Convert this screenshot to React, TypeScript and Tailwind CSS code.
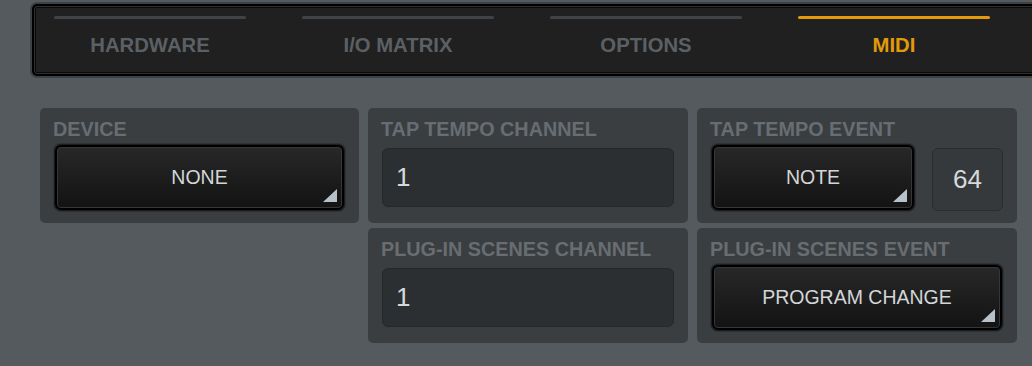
const tabs = [
  { label: "HARDWARE", active: false },
  { label: "I/O MATRIX", active: false },
  { label: "OPTIONS", active: false },
  { label: "MIDI", active: true },
];

const Corner = () => (
  <svg className="absolute bottom-[6px] right-[5px] h-[13px] w-[14px]" viewBox="0 0 14 13">
    <polygon points="14,0 14,13 0,13" fill="#b9c1c8" />
  </svg>
);

const Select = ({ value, className = "" }: { value: string; className?: string }) => (
  <div className={`h-[69px] rounded-[8px] bg-[#2e3235] p-[2px] ${className}`}>
    <div className="relative flex h-full items-center justify-center rounded-[6px] border-2 border-black bg-gradient-to-b from-[#282828] to-[#131313] text-[19.5px] text-[#d3d6d9] shadow-[inset_0_0_0_1px_#363636,0_0_0_1px_#1a1c1e]">
      {value}
      <Corner />
    </div>
  </div>
);

const Field = ({ value }: { value: string }) => (
  <div className="h-[69px] px-[1px] pt-[5px]">
    <div className="flex h-[59px] items-center rounded-[6px] border border-[#25282a] bg-[#2c2f31] pl-[13px] text-[26px] text-[#d6d9dc]">
      {value}
    </div>
  </div>
);

const Panel = ({ label, children }: { label: string; children: React.ReactNode }) => (
  <div className="rounded-[5px] bg-[#3a3e41] px-[13px] pt-[11px] pb-[11px]">
    <div className="h-[20px] text-[19.8px] font-bold leading-[20px] text-[#686d72]">{label}</div>
    <div className="mt-[4px]">{children}</div>
  </div>
);

export default function App() {
  return (
    <div className="h-[366px] w-[1032px] overflow-hidden bg-[#545a5d] font-['Liberation_Sans',Arial,sans-serif]">
      <div className="ml-[30px] mt-[2px] h-[76px] w-[1012px] rounded-[7px] bg-[#3d4144] p-[2px]">
        <div className="h-full rounded-[5px] border-2 border-black bg-[#202020] shadow-[inset_0_0_0_1px_#2e2e2e,inset_0_0_0_2px_#0a0a0a]">
          <div className="-ml-2 flex">
            {tabs.map((t) => (
              <div key={t.label} className="flex w-[248px] shrink-0 flex-col items-center">
                <div className={`mt-[10px] h-[3px] w-[192px] rounded-full ${t.active ? "bg-[#e29a0b]" : "bg-[#3f4347]"}`} />
                <div className={`mt-[14px] text-[20.3px] font-bold leading-[24px] ${t.active ? "text-[#e29a0b]" : "text-[#5b6065]"}`}>
                  {t.label}
                </div>
              </div>
            ))}
          </div>
        </div>
      </div>

      <div className="ml-[40px] mt-[30px] grid grid-cols-[319px_320px_320px] gap-x-[9px] gap-y-[5px]">
        <Panel label="DEVICE">
          <Select value="NONE" />
        </Panel>
        <Panel label="TAP TEMPO CHANNEL">
          <Field value="1" />
        </Panel>
        <Panel label="TAP TEMPO EVENT">
          <div className="flex items-start gap-[16px]">
            <Select value="NOTE" className="w-[206px]" />
            <div className="mt-[5px] flex h-[63px] w-[71px] items-center justify-center rounded-[6px] border border-[#2a2d30] bg-[#35393c] text-[26px] text-[#d6d9dc]">
              64
            </div>
          </div>
        </Panel>
        <div />
        <Panel label="PLUG-IN SCENES CHANNEL">
          <Field value="1" />
        </Panel>
        <Panel label="PLUG-IN SCENES EVENT">
          <Select value="PROGRAM CHANGE" />
        </Panel>
      </div>
    </div>
  );
}
